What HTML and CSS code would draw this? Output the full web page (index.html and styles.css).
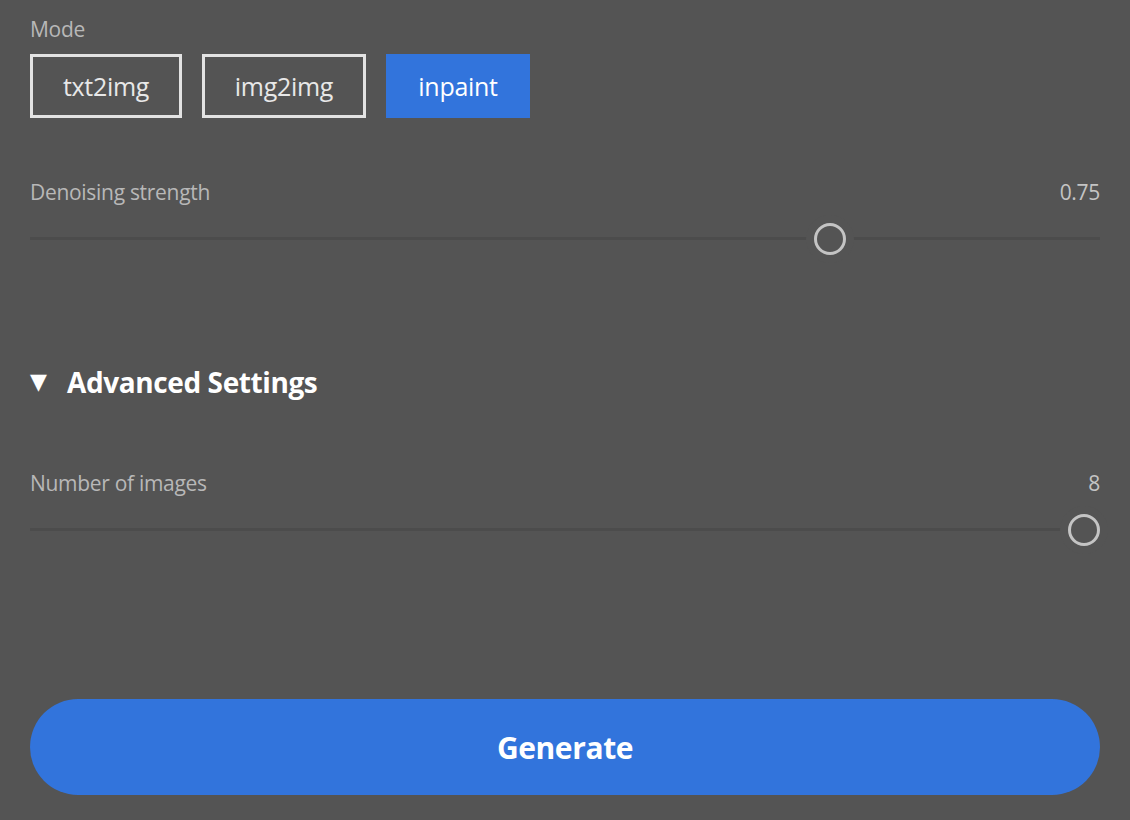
FILE: index.html
```html
<!DOCTYPE html>
<html>
<head>
<meta charset="utf-8">
<link rel="stylesheet" href="styles.css">
</head>
<body>
<main class="panel">
  <div class="field-label">Mode</div>
  <div class="mode-group">
    <button class="mode-btn">txt2img</button>
    <button class="mode-btn">img2img</button>
    <button class="mode-btn active">inpaint</button>
  </div>

  <section class="slider-field denoise">
    <div class="slider-head">
      <span class="field-label">Denoising strength</span>
      <span class="field-value">0.75</span>
    </div>
    <div class="slider">
      <div class="track"></div>
      <div class="knob" style="left: 784px"></div>
    </div>
  </section>

  <h2 class="adv-heading"><span class="caret">&#9660;</span>Advanced Settings</h2>

  <section class="slider-field images">
    <div class="slider-head">
      <span class="field-label">Number of images</span>
      <span class="field-value">8</span>
    </div>
    <div class="slider">
      <div class="track"></div>
      <div class="knob" style="left: 1038px"></div>
    </div>
  </section>

  <button class="generate">Generate</button>
</main>
</body>
</html>
```

FILE: styles.css
```css
html, body {
  margin: 0;
  padding: 0;
  background: #545454;
}
body {
  font-family: "Open Sans", "Lato", sans-serif;
  width: 1130px;
  height: 820px;
  overflow: hidden;
}
.panel {
  padding: 17px 30px 0 30px;
  display: flex;
  flex-direction: column;
}
.field-label {
  font-size: 21px;
  line-height: 24px;
  color: #b8b8b8;
  letter-spacing: -0.3px;
}
.field-value {
  font-size: 21px;
  line-height: 24px;
  color: #c4c4c4;
  letter-spacing: -0.3px;
}
.mode-group {
  display: flex;
  gap: 20px;
  margin-top: 13px;
}
.mode-btn {
  font-family: inherit;
  height: 64px;
  box-sizing: border-box;
  padding: 0;
  border: 3px solid #e3e3e3;
  background: transparent;
  color: #e8e8e8;
  font-size: 25px;
  letter-spacing: -0.3px;
  cursor: pointer;
}
.mode-btn:nth-child(1) { width: 152px; }
.mode-btn:nth-child(2) { width: 164px; }
.mode-btn.active {
  width: 144px;
  background: #3274dc;
  border-color: #3274dc;
  color: #ffffff;
}
.slider-field.denoise { margin-top: 62px; }
.slider-field.images { margin-top: 73px; }
.slider-head {
  display: flex;
  justify-content: space-between;
  align-items: center;
}
.slider {
  position: relative;
  height: 32px;
  margin-top: 19px;
}
.track {
  position: absolute;
  left: 0;
  right: 0;
  top: 14px;
  height: 3px;
  background: #4c4c4c;
}
.knob {
  position: absolute;
  top: 0;
  width: 32px;
  height: 32px;
  box-sizing: border-box;
  border-radius: 50%;
  border: 3px solid #c4c4c4;
  background: #545454;
  box-shadow: 0 0 0 8px #545454;
}
.adv-heading {
  margin: 111px 0 0 0;
  font-size: 28px;
  line-height: 32px;
  font-weight: 700;
  color: #ffffff;
  letter-spacing: -0.4px;
  display: flex;
  align-items: center;
}
.caret {
  font-size: 22px;
  width: 37px;
  letter-spacing: 0;
  font-family: "DejaVu Sans", sans-serif;
}
.generate {
  margin-top: 153px;
  height: 96px;
  width: 100%;
  border: none;
  border-radius: 48px;
  background: #3274dc;
  color: #ffffff;
  font-family: inherit;
  font-size: 30px;
  font-weight: 700;
  letter-spacing: -0.4px;
  cursor: pointer;
}
```
